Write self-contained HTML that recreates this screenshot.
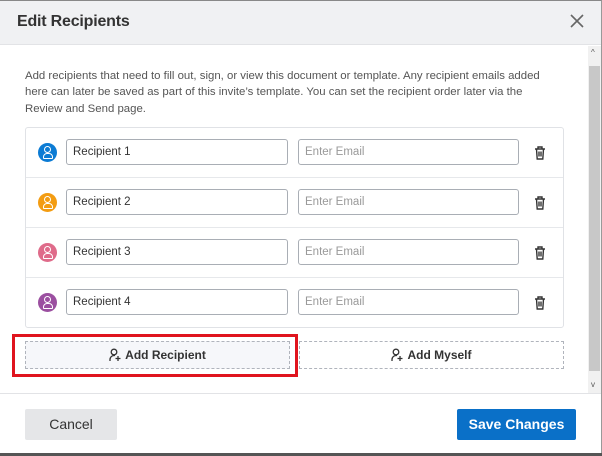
<!DOCTYPE html><html><head><style>
*{box-sizing:border-box;margin:0;padding:0}
body{width:602px;height:456px;background:#555;font-family:"Liberation Sans",sans-serif;position:relative;overflow:hidden}
.dlg{position:absolute;left:0;top:0;width:602px;height:453px;background:#fff;border-top:1px solid #888;border-right:1px solid #999}
.hdr{position:absolute;left:0;top:0;width:601px;height:44px;background:#f0f1f3;border-bottom:1px solid #e2e3e6}
.hdr h1{position:absolute;left:17px;top:12px;font-size:16px;font-weight:bold;color:#333;letter-spacing:-0.2px}
.x{position:absolute;left:570px;top:13px}
.sb{position:absolute;left:588px;top:45px;width:13px;height:347px;background:#f1f1f1}
.sb .t{position:absolute;left:1px;top:20px;width:11px;height:305px;background:#c8c8c8}
.sb span{position:absolute;left:3px;font-size:8px;color:#555}
p{position:absolute;left:25px;top:67px;width:536px;font-size:11.4px;line-height:16.3px;color:#555}
.box{position:absolute;left:25px;top:126px;width:539px;height:201px;border:1px solid #e0e2e6;border-radius:3px}
.row{height:50px;border-bottom:1px solid #e6e8eb;position:relative}
.row:last-child{border-bottom:none}
.ic{position:absolute;left:12px;top:15px;width:19px;height:19px;border-radius:50%}
.in{position:absolute;top:11px;height:26px;border:1px solid #a9aeb5;border-radius:3px;font-size:11.5px;padding:6px 6px;color:#333}
.n{left:40px;width:222px}.e{left:272px;width:221px;color:#999}
.tr{position:absolute;left:508px;top:18px}
.btn{position:absolute;top:340px;height:28px;border:1px dashed #b0b4bc;font-size:12px;color:#333;text-align:center;line-height:26px;font-weight:bold}
.btn svg{vertical-align:-3px;margin-right:3px}
.red{position:absolute;left:12px;top:333px;width:286px;height:43px;border:3px solid #e0141e}
.ft{position:absolute;left:0;top:392px;width:601px;border-top:1px solid #e2e3e6}
.c{position:absolute;left:25px;top:408px;width:92px;height:31px;background:#e5e6e8;border-radius:2px;font-size:14px;color:#333;text-align:center;line-height:31px}
.s{position:absolute;left:457px;top:408px;width:119px;height:31px;background:#0a70c8;border-radius:2px;font-size:14px;color:#fff;text-align:center;line-height:31px;font-weight:bold}
</style></head><body><div class="dlg">
<div class="hdr"><h1>Edit Recipients</h1><svg class="x" width="14" height="14" viewBox="0 0 14 14" stroke="#666" stroke-width="1.6"><path d="M1 1l12 12M13 1L1 13"/></svg></div>
<div class="sb"><span style="top:2px">^</span><div class="t"></div><span style="top:334px">v</span></div>
<p>Add recipients that need to fill out, sign, or view this document or template. Any recipient emails added here can later be saved as part of this invite’s template. You can set the recipient order later via the Review and Send page.</p>
<div class="box">
<div class="row"><div class="ic" style="background:#0b7bd4"></div><div class="in n">Recipient 1</div><div class="in e">Enter Email</div><svg class="tr" width="12" height="14" viewBox="0 0 12 14" fill="none" stroke="#333" stroke-width="1.4"><path d="M1 3h10M4 3V1h4v2M2.5 3l.7 10h5.6l.7-10M5 5.5v5M7 5.5v5"/></svg></div>
<div class="row"><div class="ic" style="background:#f39c12"></div><div class="in n">Recipient 2</div><div class="in e">Enter Email</div><svg class="tr" width="12" height="14" viewBox="0 0 12 14" fill="none" stroke="#333" stroke-width="1.4"><path d="M1 3h10M4 3V1h4v2M2.5 3l.7 10h5.6l.7-10M5 5.5v5M7 5.5v5"/></svg></div>
<div class="row"><div class="ic" style="background:#df6b8a"></div><div class="in n">Recipient 3</div><div class="in e">Enter Email</div><svg class="tr" width="12" height="14" viewBox="0 0 12 14" fill="none" stroke="#333" stroke-width="1.4"><path d="M1 3h10M4 3V1h4v2M2.5 3l.7 10h5.6l.7-10M5 5.5v5M7 5.5v5"/></svg></div>
<div class="row"><div class="ic" style="background:#9b4fa0"></div><div class="in n">Recipient 4</div><div class="in e">Enter Email</div><svg class="tr" width="12" height="14" viewBox="0 0 12 14" fill="none" stroke="#333" stroke-width="1.4"><path d="M1 3h10M4 3V1h4v2M2.5 3l.7 10h5.6l.7-10M5 5.5v5M7 5.5v5"/></svg></div>
</div>
<div class="btn" style="left:25px;width:265px;background:#f6f7fa"><svg width="13" height="14" viewBox="0 0 13 14" fill="none" stroke="#333" stroke-width="1.3"><circle cx="5" cy="4" r="2.8"/><path d="M1 13v-1.5a4 4 0 0 1 4-4h1M9 8v5M6.5 10.5h5"/></svg>Add Recipient</div>
<div class="btn" style="left:299px;width:265px"><svg width="13" height="14" viewBox="0 0 13 14" fill="none" stroke="#333" stroke-width="1.3"><circle cx="5" cy="4" r="2.8"/><path d="M1 13v-1.5a4 4 0 0 1 4-4h1M9 8v5M6.5 10.5h5"/></svg>Add Myself</div>
<div class="red"></div>
<div class="ft"></div>
<div class="c">Cancel</div><div class="s">Save Changes</div>
</div>
<style>.ic::after{content:"";position:absolute;left:6px;top:3px;width:5px;height:5px;border:1.5px solid #fff;border-radius:50%}.ic::before{content:"";position:absolute;left:4.5px;top:10px;width:8px;height:4px;border:1.5px solid #fff;border-radius:4px 4px 1px 1px}</style>
</body></html>
